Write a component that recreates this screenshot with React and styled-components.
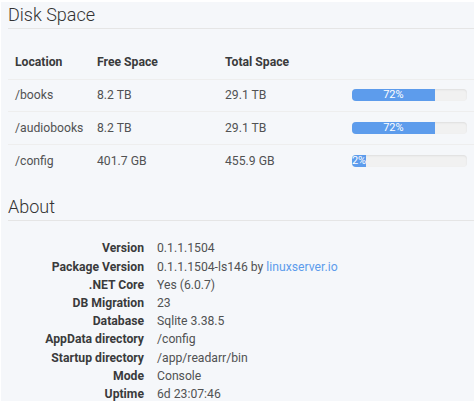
import React from "react";
import styled, { createGlobalStyle } from "styled-components";

const Global = createGlobalStyle`
  html, body { margin: 0; padding: 0; background: #ffffff; }
  body { font-family: Roboto, "Open Sans", "Liberation Sans", sans-serif; color: #515253; }
  * { box-sizing: border-box; }
`;

const Page = styled.div`
  margin: 2px 0 3px 1px;
  height: 399px;
  background: #f5f7fa;
  padding: 0 0 0 7px;
  overflow: hidden;
`;

const Section = styled.section`
  margin-bottom: 18px;
`;

const Legend = styled.h2`
  margin: 0 0 17px 0;
  font-size: 18px;
  font-weight: 300;
  line-height: 26px;
  color: #333;
  border-bottom: 1px solid #e5e5e5;
`;

const Row = styled.div`
  display: grid;
  grid-template-columns: 82px 128px 127px 1fr;
  align-items: center;
  height: 32.6px;
  font-size: 12.2px;
  font-weight: ${(p) => (p.$head ? 700 : 400)};
  color: ${(p) => (p.$head ? "#3a3b3c" : "#515253")};
  border-top: ${(p) => (p.$first ? "none" : "1px solid #eeeeee")};
`;

const Cell = styled.div`
  padding: 0 7px;
  white-space: nowrap;
`;

const Track = styled.div`
  position: relative;
  height: 12px;
  border-radius: 4px;
  background: #f1f1f1;
  box-shadow: inset 0 1px 2px rgba(0, 0, 0, 0.08);
  overflow: visible;
`;

const Fill = styled.div`
  height: 12px;
  min-width: 14px;
  border-radius: 4px 0 0 4px;
  background: #5d9cec;
  color: #fff;
  font-size: 11px;
  line-height: 12px;
  font-weight: 400;
  display: flex;
  justify-content: center;
  white-space: nowrap;
`;

const List = styled.dl`
  margin: 0;
  padding-top: 1px;
  display: grid;
  grid-template-columns: 136px 1fr;
  column-gap: 13px;
  font-size: 12.2px;
  line-height: 18.2px;
`;

const Term = styled.dt`
  text-align: right;
  font-weight: 700;
  color: #3a3b3c;
`;

const Desc = styled.dd`
  margin: 0;
  color: #515253;
  white-space: nowrap;
`;

const Link = styled.a`
  color: #5d9cec;
  text-decoration: none;
`;

const disks = [
  { loc: "/books", free: "8.2 TB", total: "29.1 TB", pct: 72 },
  { loc: "/audiobooks", free: "8.2 TB", total: "29.1 TB", pct: 72 },
  { loc: "/config", free: "401.7 GB", total: "455.9 GB", pct: 2 },
];

const about = [
  ["Version", "0.1.1.1504"],
  ["Package Version", null],
  [".NET Core", "Yes (6.0.7)"],
  ["DB Migration", "23"],
  ["Database", "Sqlite 3.38.5"],
  ["AppData directory", "/config"],
  ["Startup directory", "/app/readarr/bin"],
  ["Mode", "Console"],
  ["Uptime", "6d 23:07:46"],
];

export default function App() {
  return (
    <>
      <Global />
      <Page>
        <Section>
          <Legend>Disk Space</Legend>
          <div>
            <Row $head $first>
              <Cell>Location</Cell>
              <Cell>Free Space</Cell>
              <Cell>Total Space</Cell>
              <Cell />
            </Row>
            {disks.map((d) => (
              <Row key={d.loc}>
                <Cell>{d.loc}</Cell>
                <Cell>{d.free}</Cell>
                <Cell>{d.total}</Cell>
                <Cell>
                  <Track>
                    <Fill style={{ width: `${d.pct}%` }}>{d.pct}%</Fill>
                  </Track>
                </Cell>
              </Row>
            ))}
          </div>
        </Section>
        <Section>
          <Legend>About</Legend>
          <List>
            {about.map(([k, v]) => (
              <React.Fragment key={k}>
                <Term>{k}</Term>
                <Desc>
                  {v ?? (
                    <>
                      0.1.1.1504-ls146 by <Link href="#">linuxserver.io</Link>
                    </>
                  )}
                </Desc>
              </React.Fragment>
            ))}
          </List>
        </Section>
      </Page>
    </>
  );
}
